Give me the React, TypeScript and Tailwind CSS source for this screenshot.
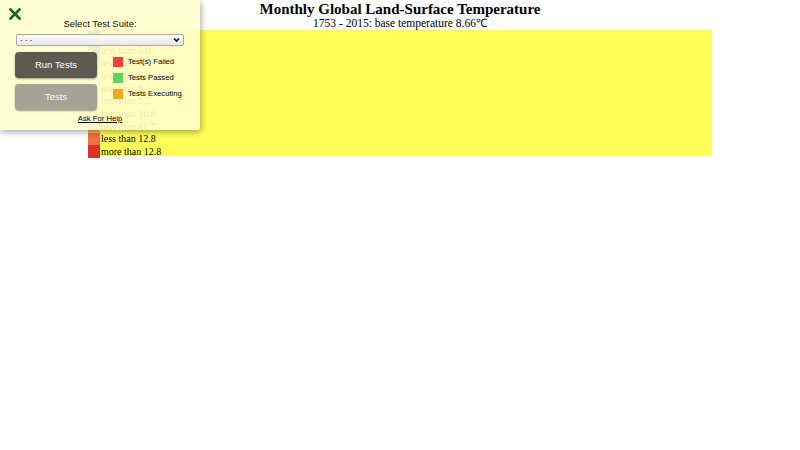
import React from "react";

const legend = [
  { label: "less than 3.9", color: "#313695" },
  { label: "less than 5.0", color: "#4575b4" },
  { label: "less than 6.1", color: "#74add1" },
  { label: "less than 7.2", color: "#abd9e9" },
  { label: "less than 8.3", color: "#e0f3f8" },
  { label: "less than 9.5", color: "#ffffbf" },
  { label: "less than 10.6", color: "#fee090" },
  { label: "less than 11.7", color: "#fdae61" },
  { label: "less than 12.8", color: "#f46d43" },
  { label: "more than 12.8", color: "#d73027" },
];

const status = [
  { label: "Test(s) Failed", color: "#f44336" },
  { label: "Tests Passed", color: "#5cd65c" },
  { label: "Tests Executing", color: "#f5a623" },
];

export default function App() {
  return (
    <div className="relative w-[800px] h-[450px] bg-white font-['Liberation_Serif',serif] text-black">
      {/* Heat map page */}
      <h1 className="pt-[2px] text-center text-[15px] leading-[15px] font-bold">
        Monthly Global Land-Surface Temperature
      </h1>
      <p className="text-center text-[11.5px] leading-[13px]">
        1753 - 2015: base temperature 8.66℃
      </p>
      <div className="mx-auto w-[624px] h-[126px] bg-[#ffff55]">
        <div className="pt-[1px]">
          {legend.map((item) => (
            <div key={item.label} className="flex items-center h-[12.7px]">
              <span
                className="w-[12px] h-[12.7px]"
                style={{ backgroundColor: item.color }}
              />
              <span className="ml-[1px] pt-[1px] text-[10px] leading-[12px] whitespace-nowrap">
                {item.label}
              </span>
            </div>
          ))}
        </div>
      </div>

      {/* Test suite panel */}
      <div className="absolute top-0 left-0 w-[200px] h-[130px] bg-[rgba(255,255,204,0.9)] shadow-[1px_2px_6px_rgba(0,0,0,0.35)] rounded-br-[3px] font-['Liberation_Sans',Arial,sans-serif]">
        <svg
          className="absolute top-[8px] left-[9px]"
          width="12"
          height="12"
          viewBox="0 0 12 12"
        >
          <path
            d="M1.5 1.5 L10.5 10.5 M10.5 1.5 L1.5 10.5"
            stroke="#0a6b14"
            strokeWidth="2.6"
            strokeLinecap="square"
          />
        </svg>
        <div className="pt-[18px] text-center text-[9.5px] leading-[12px] text-[#111]">
          Select Test Suite:
        </div>
        <div className="relative mx-[16px] mt-[4px] h-[12px] rounded-[2px] border border-[#a9a9a9] bg-gradient-to-b from-[#fafafa] to-[#e9e9e9]">
          <span className="absolute left-[3px] top-0 text-[8px] leading-[10px] text-[#333]">
            - - -
          </span>
          <svg
            className="absolute right-[3px] top-[2px]"
            width="7"
            height="6"
            viewBox="0 0 7 6"
          >
            <path
              d="M1 1.5 L3.5 4 L6 1.5"
              stroke="#111"
              strokeWidth="1.6"
              fill="none"
            />
          </svg>
        </div>
        <div className="flex mt-[6px]">
          <div className="ml-[15px] flex flex-col gap-[6px]">
            <button className="w-[82px] h-[26px] rounded-[4px] bg-[#5c5b51] text-white text-[9.5px] shadow-[0_1px_2px_rgba(0,0,0,0.4)]">
              Run Tests
            </button>
            <button className="w-[82px] h-[26px] rounded-[4px] bg-[#a4a396] text-[#fafaf5] text-[9.5px] shadow-[0_1px_2px_rgba(0,0,0,0.4)]">
              Tests
            </button>
          </div>
          <div className="ml-[16px] pt-[5px] flex flex-col gap-[6px]">
            {status.map((s) => (
              <div key={s.label} className="flex items-center h-[10px]">
                <span
                  className="w-[10px] h-[10px]"
                  style={{ backgroundColor: s.color }}
                />
                <span className="ml-[5px] text-[7.7px] leading-[10px] text-[#000] whitespace-nowrap">
                  {s.label}
                </span>
              </div>
            ))}
          </div>
        </div>
        <div className="mt-[4px] text-center text-[7.7px] leading-[10px]">
          <a className="underline text-[#000]">Ask For Help</a>
        </div>
      </div>
    </div>
  );
}
